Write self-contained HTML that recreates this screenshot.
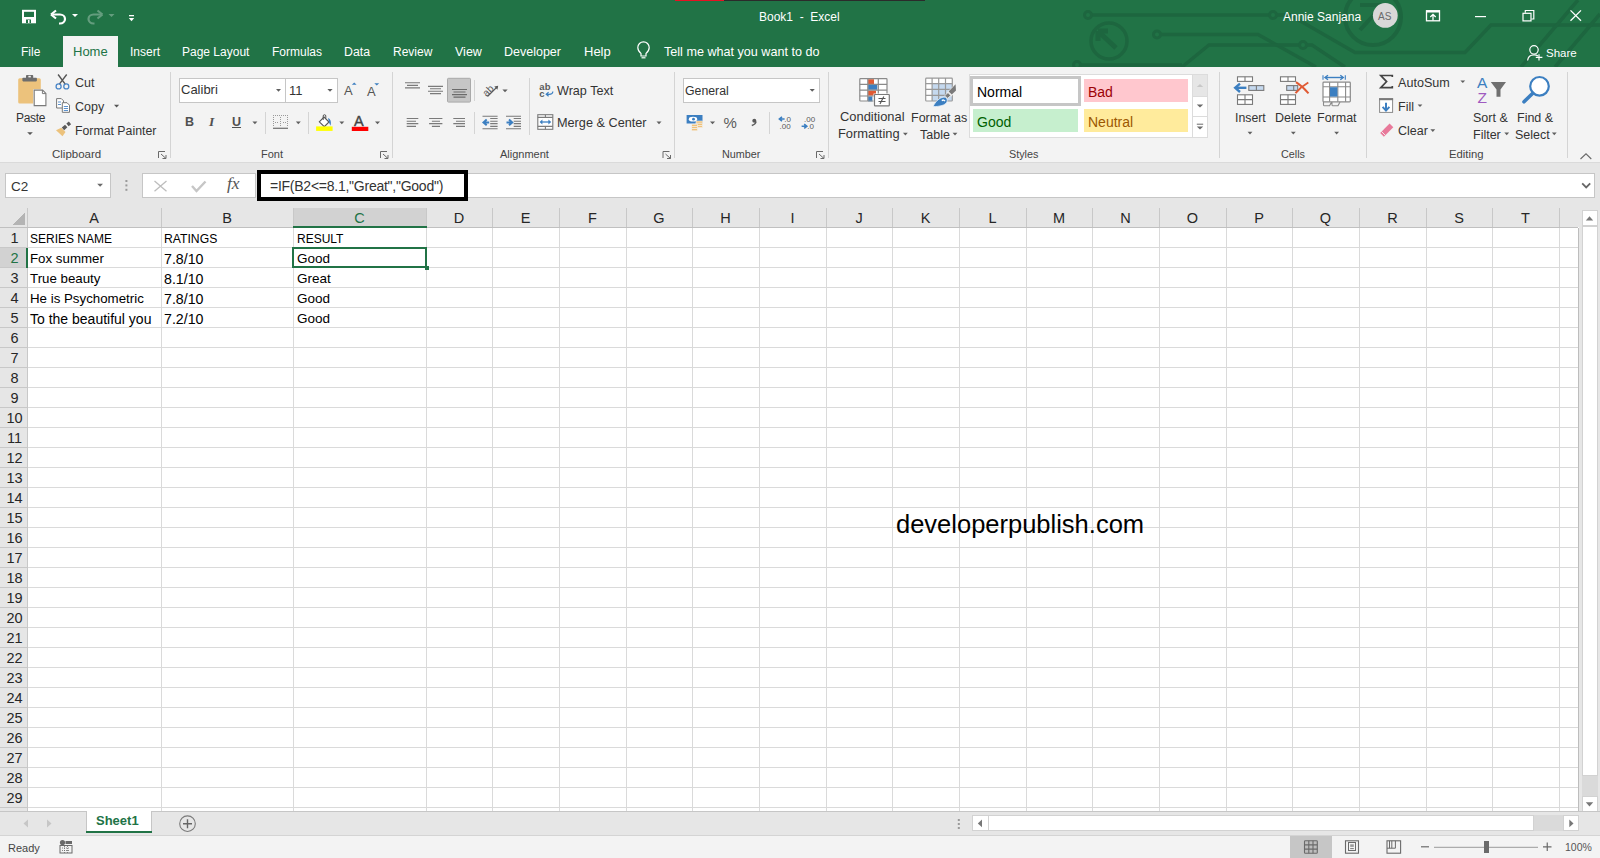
<!DOCTYPE html>
<html><head><meta charset="utf-8">
<style>
*{margin:0;padding:0;box-sizing:border-box}
html,body{width:1600px;height:858px;overflow:hidden;background:#fff;font-family:"Liberation Sans",sans-serif;color:#262626}
.a{position:absolute;white-space:nowrap}
.tt{position:absolute;color:#fff;font-size:12px;white-space:nowrap;line-height:14px}
.rl{position:absolute;font-size:12.5px;color:#333;white-space:nowrap;line-height:14px}
.gl{position:absolute;font-size:11px;color:#444;white-space:nowrap;line-height:13px}
svg{position:absolute;overflow:visible}
</style></head><body>

<div style="position:absolute;left:0;top:0;width:1600px;height:67px;background:#217346"></div>
<svg width="1600" height="67" style="left:0;top:0" fill="none" stroke="#1d663f" stroke-width="3.5">
 <path d="M1091 15 H1270"/><circle cx="1088" cy="15" r="3.5" stroke-width="3"/><circle cx="1273" cy="15" r="3.5" stroke-width="3"/>
 <path d="M1277 15 H1290 L1355 52.5 H1465 L1491 25 H1600"/>
 <circle cx="1109" cy="41" r="18"/>
 <path d="M1116 48 L1100 33 M1098 31 h10 M1098 31 v10" stroke-width="5"/>
 <circle cx="1157" cy="34.5" r="3.5" stroke-width="3"/><path d="M1161 34.5 H1258 L1316 67"/>
 <path d="M1182 67 L1209 45 H1299"/><circle cx="1303" cy="45" r="3.5" stroke-width="3"/><path d="M1307 45 H1312 L1345 67"/>
 <circle cx="1077" cy="65" r="3.5" stroke-width="3"/><path d="M1081 65 H1182"/>
 <circle cx="1373" cy="17" r="28" stroke-width="4"/>
 <path d="M1360 30 L1382 6 M1360 5 H1384" stroke-width="4"/>
 <path d="M1521 67 L1578 0 M1555 67 L1600 14"/>
</svg>
<div style="position:absolute;left:675px;top:0;width:49px;height:1px;background:#e81123"></div>
<div style="position:absolute;left:724px;top:0;width:201px;height:1px;background:#2b2b2b"></div>
<!-- QAT -->
<svg width="140" height="30" style="left:0;top:0">
 <rect x="23" y="10.8" width="12" height="11.5" fill="none" stroke="#fff" stroke-width="2"/>
 <rect x="23" y="17" width="12" height="6" fill="#fff"/>
 <rect x="26" y="19.5" width="5" height="3.5" fill="#217346"/><rect x="28" y="20" width="1.5" height="3" fill="#fff"/>
 <path d="M52.5 14.5 H60 A5 4.5 0 0 1 60 23.5 H59" fill="none" stroke="#fff" stroke-width="2.2"/>
 <path d="M51 14.5 L56 10.5 M51 14.5 L56 18.5" fill="none" stroke="#fff" stroke-width="2.2"/>
 <path d="M72 14 H78 L75 17 Z" fill="#fff"/>
 <g opacity="0.3"><path d="M101 14.5 H93.5 A5 4.5 0 0 0 93.5 23.5 H94.5" fill="none" stroke="#fff" stroke-width="2.2"/>
 <path d="M102.5 14.5 L97.5 10.5 M102.5 14.5 L97.5 18.5" fill="none" stroke="#fff" stroke-width="2.2"/>
 <path d="M108.5 14 H114.5 L111.5 17 Z" fill="#fff"/></g>
 <rect x="129" y="15" width="5" height="1.3" fill="#fff"/><path d="M128.8 18 H134.2 L131.5 21.2 Z" fill="#fff"/>
</svg>
<div class="tt" style="left:759px;top:10px;font-size:12px">Book1&nbsp;&nbsp;-&nbsp;&nbsp;Excel</div>
<div class="tt" style="left:1283px;top:10px;font-size:12px">Annie Sanjana</div>
<svg width="1600" height="67" style="left:0;top:0">
 <circle cx="1385.3" cy="15.4" r="12.4" fill="#d8d8d8"/>
 <rect x="1426.5" y="10.8" width="13" height="10" fill="none" stroke="#fff" stroke-width="1.3"/>
 <rect x="1426" y="10.3" width="14" height="2.2" fill="#fff"/>
 <path d="M1433 20.5 V14.5 M1430.3 17 L1433 14.3 L1435.7 17" fill="none" stroke="#fff" stroke-width="1.3"/>
 <rect x="1475" y="16" width="11" height="1.2" fill="#fff"/>
 <path d="M1525.3 12.8 V10.5 H1533.8 V19 H1531.4" fill="none" stroke="#fff" stroke-width="1.2"/>
 <rect x="1523" y="13.3" width="8" height="7.6" fill="none" stroke="#fff" stroke-width="1.2"/>
 <path d="M1570.5 10.4 L1581 20.8 M1581 10.4 L1570.5 20.8" fill="none" stroke="#fff" stroke-width="1.3"/>
 <circle cx="1534" cy="49.8" r="4.2" fill="none" stroke="#fff" stroke-width="1.2"/>
 <path d="M1527.6 60.5 C1528 56.5 1530.5 54.8 1534 54.8 C1535.5 54.8 1537 55.2 1538 56" fill="none" stroke="#fff" stroke-width="1.2"/>
 <path d="M1539 54.2 V60.6 M1535.8 57.4 H1542.4" fill="none" stroke="#fff" stroke-width="1.2"/>
</svg>
<div class="a" style="left:1378px;top:10px;font-size:10px;color:#6a6a6a;line-height:14px">AS</div>
<div style="position:absolute;left:63px;top:36px;width:55px;height:32px;background:#f3f3f3"></div>
<div class="tt" style="left:21px;top:45px">File</div>
<div class="tt" style="left:73px;top:45px;color:#217346;font-size:13px">Home</div>
<div class="tt" style="left:130px;top:45px">Insert</div>
<div class="tt" style="left:182px;top:45px">Page Layout</div>
<div class="tt" style="left:272px;top:45px">Formulas</div>
<div class="tt" style="left:344px;top:45px;font-size:12.3px">Data</div>
<div class="tt" style="left:393px;top:45px">Review</div>
<div class="tt" style="left:455px;top:45px;font-size:12.5px">View</div>
<div class="tt" style="left:504px;top:45px;font-size:12.5px">Developer</div>
<div class="tt" style="left:584px;top:45px;font-size:13px">Help</div>
<svg width="20" height="24" style="left:636px;top:40px">
 <path d="M5 13.5 C2.5 11.5 1.8 9.5 1.8 7.5 A5.7 5.7 0 0 1 13.2 7.5 C13.2 9.5 12.5 11.5 10 13.5 V16 H5 Z" fill="none" stroke="#fff" stroke-width="1.2"/>
 <path d="M5.5 17.8 H9.5" stroke="#fff" stroke-width="1.2"/>
</svg>
<div class="tt" style="left:664px;top:45px;font-size:12.6px">Tell me what you want to do</div>
<div class="tt" style="left:1546px;top:46px;font-size:11.5px">Share</div>

<div style="position:absolute;left:0;top:67px;width:1600px;height:95px;background:#f3f3f3"></div>
<!-- separators -->
<svg width="1600" height="162" style="left:0;top:0" shape-rendering="crispEdges">
 <g fill="#d4d4d4">
 <rect x="170" y="72" width="1" height="86"/>
 <rect x="392" y="72" width="1" height="86"/>
 <rect x="674" y="72" width="1" height="86"/>
 <rect x="828" y="72" width="1" height="86"/>
 <rect x="1219" y="72" width="1" height="86"/>
 <rect x="1366" y="72" width="1" height="86"/>
 <rect x="1567" y="72" width="1" height="86"/>
 <rect x="265" y="112" width="1" height="22"/>
 <rect x="308" y="112" width="1" height="22"/>
 <rect x="474" y="80" width="1" height="21"/>
 <rect x="474" y="112" width="1" height="22"/>
 <rect x="529" y="78" width="1" height="57"/>
 <rect x="769" y="112" width="1" height="22"/>
 </g>
</svg>
<!-- group labels -->
<div class="gl" style="left:52px;top:148px;font-size:11.5px">Clipboard</div>
<div class="gl" style="left:261px;top:148px;font-size:11px">Font</div>
<div class="gl" style="left:500px;top:148px;font-size:11px">Alignment</div>
<div class="gl" style="left:722px;top:148px;font-size:10.8px">Number</div>
<div class="gl" style="left:1009px;top:148px;font-size:10.8px">Styles</div>
<div class="gl" style="left:1281px;top:148px;font-size:10.8px">Cells</div>
<div class="gl" style="left:1449px;top:148px;font-size:11.3px">Editing</div>
<!-- clipboard -->
<div class="rl" style="left:16px;top:111px;font-size:12px;letter-spacing:-0.3px">Paste</div>
<div class="rl" style="left:75px;top:76px">Cut</div>
<div class="rl" style="left:75px;top:100px">Copy</div>
<div class="rl" style="left:75px;top:124px;font-size:12.3px">Format Painter</div>
<!-- font -->
<div style="position:absolute;left:179px;top:78px;width:107px;height:25px;background:#fff;border:1px solid #c6c6c6"></div>
<div style="position:absolute;left:285px;top:78px;width:53px;height:25px;background:#fff;border:1px solid #c6c6c6"></div>
<div class="rl" style="left:181px;top:83px;font-size:13px;color:#333">Calibri</div>
<div class="rl" style="left:289px;top:84px;font-size:13px;color:#333">11</div>
<!-- alignment -->
<div class="rl" style="left:557px;top:84px;font-size:12.6px">Wrap Text</div>
<div class="rl" style="left:557px;top:116px;font-size:12.7px">Merge &amp; Center</div>
<!-- number -->
<div style="position:absolute;left:683px;top:78px;width:137px;height:25px;background:#fff;border:1px solid #c6c6c6"></div>
<div class="rl" style="left:685px;top:84px;font-size:12.3px;color:#333">General</div>
<!-- styles -->
<div class="rl" style="left:840px;top:110px;font-size:12.9px">Conditional</div>
<div class="rl" style="left:838px;top:127px;font-size:12.9px">Formatting</div>
<div class="rl" style="left:911px;top:111px">Format as</div>
<div class="rl" style="left:920px;top:128px">Table</div>
<div style="position:absolute;left:969px;top:74px;width:224px;height:64px;background:#fff;border:1px solid #dcdcdc;border-right:none"></div>
<div style="position:absolute;left:970px;top:76px;width:111px;height:30px;background:#fff;border:3px solid #c6c6c6"></div>
<div style="position:absolute;left:1084px;top:79px;width:104px;height:23px;background:#ffc7ce"></div>
<div style="position:absolute;left:973px;top:109px;width:105px;height:23px;background:#c6efce"></div>
<div style="position:absolute;left:1084px;top:109px;width:104px;height:23px;background:#ffeb9c"></div>
<div class="rl" style="left:977px;top:85px;font-size:14px;color:#000">Normal</div>
<div class="rl" style="left:1088px;top:85px;font-size:14px;color:#9c0006">Bad</div>
<div class="rl" style="left:977px;top:115px;font-size:14px;color:#006100">Good</div>
<div class="rl" style="left:1088px;top:115px;font-size:14px;color:#9c5700">Neutral</div>
<div style="position:absolute;left:1192px;top:74px;width:16px;height:64px;background:#fff;border:1px solid #dcdcdc"></div>
<div style="position:absolute;left:1193px;top:75px;width:14px;height:21px;background:#e6e6e6"></div>
<div style="position:absolute;left:1193px;top:96px;width:14px;height:1px;background:#dcdcdc"></div>
<div style="position:absolute;left:1193px;top:116px;width:14px;height:1px;background:#dcdcdc"></div>
<!-- cells -->
<div class="rl" style="left:1235px;top:111px;font-size:12.3px">Insert</div>
<div class="rl" style="left:1275px;top:111px;font-size:12.5px">Delete</div>
<div class="rl" style="left:1317px;top:111px;font-size:12.5px">Format</div>
<!-- editing -->
<div class="rl" style="left:1398px;top:76px;font-size:12.6px">AutoSum</div>
<div class="rl" style="left:1398px;top:100px">Fill</div>
<div class="rl" style="left:1398px;top:124px">Clear</div>
<div class="rl" style="left:1473px;top:111px;font-size:12.5px">Sort &amp;</div>
<div class="rl" style="left:1473px;top:128px;font-size:12.5px">Filter</div>
<div class="rl" style="left:1517px;top:111px;font-size:12.5px">Find &amp;</div>
<div class="rl" style="left:1515px;top:128px;font-size:12.5px">Select</div>

<svg width="1600" height="162" style="left:0;top:0">
 <!-- Paste -->
 <rect x="18.2" y="78.2" width="22.6" height="25.4" rx="1.5" fill="#ecc27c"/>
 <rect x="22.4" y="77.7" width="14.5" height="3.7" rx="0.8" fill="#6d6d6d"/>
 <path d="M26 78.5 V75.8 Q26 75 26.8 75 H32.4 Q33.2 75 33.2 75.8 V78.5 Z" fill="#6d6d6d"/>
 <rect x="28.4" y="75.8" width="2.4" height="1.6" fill="#f3f3f3"/>
 <path d="M33.2 89.2 H43 L46.8 93 V106.5 H33.2 Z" fill="#f3f3f3"/>
 <path d="M34.2 90.1 H42.6 L45.9 93.4 V105.6 H34.2 Z" fill="#fff" stroke="#7a7a7a" stroke-width="1.1"/>
 <path d="M42.4 90.1 V93.6 H45.9" fill="none" stroke="#7a7a7a" stroke-width="1"/>
 <path d="M27.2 132.3 H32.8 L30 135 Z" fill="#555"/>
 <!-- Cut -->
 <path d="M58.1 74.5 L65.2 84.2 M66.7 74.5 L59.4 84.2" stroke="#555" stroke-width="1.4" fill="none"/>
 <circle cx="58.6" cy="86.4" r="2.5" fill="none" stroke="#4a86c8" stroke-width="1.3"/>
 <circle cx="66.3" cy="86.4" r="2.5" fill="none" stroke="#4a86c8" stroke-width="1.3"/>
 <!-- Copy -->
 <path d="M56.6 98.6 H61.3 L63.5 100.8 V108 H56.6 Z" fill="#fff" stroke="#777" stroke-width="1"/>
 <path d="M62.3 102.7 H67 L69.5 105.2 V112.3 H62.3 Z" fill="#fff" stroke="#777" stroke-width="1"/>
 <path d="M58 102 H61 M58 104.5 H61 M63.8 106.5 H68 M63.8 108.5 H68 M63.8 110.5 H68" stroke="#4a86c8" stroke-width="0.9"/>
 <path d="M114 104.8 H119.2 L116.6 107.4 Z" fill="#555"/>
 <!-- Format painter -->
 <path d="M56 130.2 L61.3 127.8 L65.5 132 L62.5 136.2 Z" fill="#ecc27c"/>
 <path d="M63 128.8 L66.2 126 M67.5 124.8 L70 122.8" stroke="#5a5a5a" stroke-width="3.6" fill="none"/>
</svg>

<svg width="1600" height="162" style="left:0;top:0">
 <g fill="#5f5f5f">
 <!-- dropdown carets -->
 <path d="M276 89 H281 L278.5 91.8 Z"/>
 <path d="M327.4 89 H332.6 L330 91.8 Z"/>
 <path d="M252.4 121.5 H257.4 L254.9 124.2 Z"/>
 <path d="M295.9 121.5 H300.8 L298.3 124.2 Z"/>
 <path d="M339.4 121.5 H344.3 L341.8 124.2 Z"/>
 <path d="M375 121.5 H380 L377.5 124.2 Z"/>
 <path d="M502.4 89.4 H507.7 L505 92.2 Z"/>
 <path d="M656.5 121.5 H661.5 L659 124.2 Z"/>
 <path d="M809.6 89 H814.8 L812.2 91.8 Z"/>
 <path d="M710 121.6 H715.1 L712.5 124.2 Z"/>
 </g>
 <!-- launchers -->
 <g fill="none" stroke="#6a6a6a" stroke-width="1">
 <path d="M158.5 158 V151.5 H165"/><path d="M161 154 L166 158.5 M166 155 V158.5 H162.5"/>
 <path d="M380.5 158 V151.5 H387"/><path d="M383 154 L388 158.5 M388 155 V158.5 H384.5"/>
 <path d="M663 158 V151.5 H669.5"/><path d="M665.5 154 L670.5 158.5 M670.5 155 V158.5 H667"/>
 <path d="M816.5 158 V151.5 H823"/><path d="M819 154 L824 158.5 M824 155 V158.5 H820.5"/>
 </g>
 <!-- grow/shrink font -->
 <path d="M351.8 84.8 L354.2 82.4 L356.6 84.8 Z" fill="#3c7fc1"/>
 <path d="M374.3 83.2 H379.2 L376.75 85.6 Z" fill="#3c7fc1"/>
 <!-- borders icon -->
 <g fill="#9a9a9a">
  <rect x="273" y="115" width="1" height="1"/><rect x="275" y="115" width="1" height="1"/><rect x="277" y="115" width="1" height="1"/><rect x="279" y="115" width="1" height="1"/><rect x="281" y="115" width="1" height="1"/><rect x="283" y="115" width="1" height="1"/><rect x="285" y="115" width="1" height="1"/><rect x="287" y="115" width="1" height="1"/>
  <rect x="273" y="117" width="1" height="1"/><rect x="273" y="119" width="1" height="1"/><rect x="273" y="121" width="1" height="1"/><rect x="273" y="123" width="1" height="1"/><rect x="273" y="125" width="1" height="1"/>
  <rect x="287" y="117" width="1" height="1"/><rect x="287" y="119" width="1" height="1"/><rect x="287" y="121" width="1" height="1"/><rect x="287" y="123" width="1" height="1"/><rect x="287" y="125" width="1" height="1"/>
  <rect x="275" y="122" width="1" height="1"/><rect x="277" y="122" width="1" height="1"/><rect x="283" y="122" width="1" height="1"/><rect x="285" y="122" width="1" height="1"/>
 </g>
 <g fill="#9a9a9a"><rect x="280" y="117" width="1" height="1"/><rect x="280" y="119" width="1" height="1"/><rect x="280" y="121" width="1" height="1"/><rect x="280" y="123" width="1" height="1"/><rect x="280" y="125" width="1" height="1"/></g>
 <path d="M273 128.3 H288" stroke="#777" stroke-width="1.3"/>
 <!-- fill color -->
 <path d="M319.3 121.8 L324 117 L329 122 L324.3 126.7 Z" fill="#fff" stroke="#555" stroke-width="1.1"/>
 <path d="M323.2 120 V116 A1.3 1.3 0 0 1 325.8 116 V118.5" fill="none" stroke="#555" stroke-width="1"/>
 <path d="M328 118 Q332 119.5 330.5 125.8 Q329 123 328.8 121.5 Z" fill="#3c7fc1"/>
 <rect x="316.1" y="126.4" width="16.5" height="4.5" fill="#ffff00"/>
 <!-- font color -->
 <rect x="351.8" y="126.8" width="16.5" height="4.2" fill="#ff0000"/>
 <!-- align top -->
 <g stroke="#7a7a7a" stroke-width="1.1" fill="none">
  <path d="M405 82.7 H420 M407 85.4 H418 M405 87.9 H420"/>
  <path d="M428 86.4 H443 M430 88.8 H441 M428 91.3 H443 M430 93.6 H441"/>
  <path d="M406.7 118.5 H418.3 M406.7 121.3 H416 M406.7 123.6 H418.3 M406.7 126.4 H416"/>
  <path d="M429.1 118.5 H442.4 M431.9 121.3 H440 M429.1 123.6 H442.4 M431.9 126.4 H440"/>
  <path d="M453.3 118.5 H465 M456 121.3 H465 M453.3 123.6 H465 M456 126.4 H465"/>
  <path d="M482.5 116.3 H497.6 M490.2 118.5 H497.6 M490.2 121.3 H497.6 M490.2 123.6 H497.6 M490.2 126.4 H497.6 M482.5 128.7 H497.6"/>
  <path d="M506 116.3 H521 M513.7 118.5 H521 M513.7 121.3 H521 M513.7 123.6 H521 M513.7 126.4 H521 M506 128.7 H521"/>
 </g>
 <rect x="447.5" y="78.3" width="23" height="23.8" rx="1" fill="#c6c6c6" stroke="#a9a9a9" stroke-width="1"/>
 <g stroke="#6a6a6a" stroke-width="1.1" fill="none"><path d="M452 89.5 H467 M453.5 92 H465.5 M452 94.6 H467 M453.5 97.1 H465.5"/></g>
 <!-- indent arrows -->
 <path d="M489.2 122.4 H484.2 M486.7 119.6 L483.5 122.4 L486.7 125.2" fill="none" stroke="#3c7fc1" stroke-width="2"/>
 <path d="M506.5 122.4 H511.5 M509 119.6 L512.2 122.4 L509 125.2" fill="none" stroke="#3c7fc1" stroke-width="2"/>
 <!-- orientation -->
 <g transform="translate(489,89.5) rotate(-45)"><text x="-7" y="3.5" font-family="Liberation Sans" font-size="10" fill="#5a5a5a">ab</text></g>
 <path d="M487.5 96.5 L497.5 86.5" stroke="#5a5a5a" stroke-width="1.1"/>
 <path d="M498.2 85.8 L494.3 86.6 L497.4 89.7 Z" fill="#5a5a5a"/>
 <!-- wrap text -->
 <text x="539.3" y="89.6" font-family="Liberation Sans" font-size="9.5" font-weight="bold" fill="#5a5a5a" letter-spacing="0.1">ab</text>
 <text x="539.3" y="96.7" font-family="Liberation Sans" font-size="9.5" font-weight="bold" fill="#5a5a5a">c</text>
 <path d="M552.8 91.5 Q552.8 94.3 549 94.3 H546.5 M548.6 92.2 L546.2 94.3 L548.6 96.3" fill="none" stroke="#3c7fc1" stroke-width="1.2"/>
 <!-- merge -->
 <rect x="537.8" y="114.7" width="15" height="14.6" fill="#fff" stroke="#7a7a7a" stroke-width="1.1"/>
 <path d="M537.8 117.4 H552.8 M537.8 126.4 H552.8 M545.4 114.7 V117.4 M545.4 126.4 V129.3" stroke="#7a7a7a" stroke-width="1.1" fill="none"/>
 <path d="M541 122 H549.8" stroke="#3c7fc1" stroke-width="1.3"/>
 <path d="M539.6 122 L542.4 119.6 V124.4 Z M551.2 122 L548.4 119.6 V124.4 Z" fill="#3c7fc1"/>
 <!-- currency -->
 <rect x="686.6" y="115" width="15.9" height="8.5" fill="#3c7fc1"/>
 <ellipse cx="693" cy="119.2" rx="4.2" ry="2.4" fill="#fff"/><circle cx="693.5" cy="119.2" r="1.4" fill="#3c7fc1"/>
 <g fill="#f0c27a" stroke="#f3f3f3" stroke-width="0.6">
  <rect x="696" y="121" width="6.5" height="2.2"/><rect x="696" y="123.2" width="6.5" height="2.2"/><rect x="696" y="125.4" width="6.5" height="2.2"/>
  <rect x="691.7" y="124.2" width="5.8" height="2.2"/><rect x="691.7" y="126.4" width="5.8" height="2.2"/><rect x="691.7" y="128.6" width="5.8" height="2.2"/>
 </g>
 <text x="723.5" y="128.2" font-family="Liberation Sans" font-size="15" fill="#5a5a5a">%</text>
 <circle cx="754.3" cy="120.8" r="2" fill="#5a5a5a"/><path d="M756 121.5 Q755.8 124.3 751.8 125.5" fill="none" stroke="#5a5a5a" stroke-width="1.5"/>
 <!-- inc/dec decimal -->
 <text x="784.3" y="121.8" font-family="Liberation Sans" font-size="8" fill="#5a5a5a">.0</text>
 <text x="779.6" y="129.3" font-family="Liberation Sans" font-size="8" fill="#5a5a5a">.00</text>
 <path d="M784.6 119 H779.8 M782 116.9 L779.4 119 L782 121.1" fill="none" stroke="#3c7fc1" stroke-width="1.6"/>
 <text x="804" y="121.8" font-family="Liberation Sans" font-size="8" fill="#5a5a5a">.00</text>
 <text x="807.3" y="129.3" font-family="Liberation Sans" font-size="8" fill="#5a5a5a">.0</text>
 <path d="M801.6 126.3 H806.6 M804.2 124.2 L806.8 126.3 L804.2 128.4" fill="none" stroke="#3c7fc1" stroke-width="1.6"/>
</svg>
<div class="a" style="left:185px;top:114px;font-size:12.5px;font-weight:bold;color:#505050;line-height:16px">B</div>
<div class="a" style="left:209px;top:114px;font-size:13.5px;font-weight:bold;font-style:italic;font-family:'Liberation Serif',serif;color:#505050;line-height:16px">I</div>
<div class="a" style="left:232px;top:114px;font-size:12.5px;font-weight:bold;color:#505050;line-height:16px;text-decoration:underline;text-underline-offset:1px">U</div>
<div class="a" style="left:344px;top:83px;font-size:13px;color:#555;line-height:16px">A</div>
<div class="a" style="left:367px;top:83.5px;font-size:13px;color:#555;line-height:16px">A</div>
<div class="a" style="left:354px;top:112px;font-size:14.5px;color:#444;line-height:18px;-webkit-text-stroke:0.4px #444">A</div>

<svg width="1600" height="162" style="left:0;top:0">
 <g fill="#5f5f5f">
 <path d="M903 132.8 H907.8 L905.4 135.4 Z"/>
 <path d="M952.6 132.8 H957.4 L955 135.4 Z"/>
 <path d="M1247.6 131.8 H1252.4 L1250 134.4 Z"/>
 <path d="M1290.9 131.8 H1295.7 L1293.3 134.4 Z"/>
 <path d="M1334.2 131.8 H1339 L1336.6 134.4 Z"/>
 <path d="M1460.4 80.5 H1465.2 L1462.8 83.1 Z"/>
 <path d="M1417.6 104.5 H1422.4 L1420 107.1 Z"/>
 <path d="M1430.4 129.3 H1435.2 L1432.8 131.9 Z"/>
 <path d="M1504.3 132.6 H1509.1 L1506.7 135.2 Z"/>
 <path d="M1551.9 132.6 H1556.7 L1554.3 135.2 Z"/>
 </g>
 <path d="M1196.8 87 L1200 84 L1203.2 87 Z" fill="#c8c8c8"/>
 <path d="M1196.8 104.6 H1203.2 L1200 107.6 Z" fill="#6a6a6a"/>
 <path d="M1196.8 124.2 H1203.2" stroke="#6a6a6a" stroke-width="1"/><path d="M1196.8 126.4 H1203.2 L1200 129.4 Z" fill="#6a6a6a"/>
 <path d="M1580.5 159 L1586 153.8 L1591.3 159" fill="none" stroke="#6a6a6a" stroke-width="1.1"/>
 <!-- conditional formatting -->
 <rect x="859.8" y="78.7" width="27.2" height="22.3" fill="#fff"/>
 <rect x="868.1" y="79.2" width="5.9" height="5" fill="#e05a34"/>
 <rect x="868.1" y="84.8" width="9.2" height="5" fill="#3c7fc1"/>
 <rect x="868.1" y="90.6" width="7.9" height="5" fill="#e05a34"/>
 <rect x="868.1" y="96.4" width="4.3" height="5" fill="#3c7fc1"/>
 <g fill="none" stroke="#8a8a8a" stroke-width="1.2">
  <rect x="859.8" y="78.7" width="27.2" height="22.3" rx="0.8"/>
  <path d="M859.8 84.3 H887 M859.8 90.2 H887 M859.8 96 H887 M878.3 78.7 V101"/>
 </g>
 <path d="M867.8 78.7 V101" stroke="#8a8a8a" stroke-width="1.2"/>
 <rect x="873.5" y="93.5" width="16.8" height="13.4" fill="#f3f3f3"/>
 <rect x="874.5" y="94.5" width="14.8" height="11.4" rx="0.6" fill="#fff" stroke="#7a7a7a" stroke-width="1.2"/>
 <path d="M878.5 98.5 H885.5 M878.5 101.5 H885.5 M883.8 96.5 L880 104" stroke="#555" stroke-width="1.1" fill="none"/>
 <!-- format as table -->
 <rect x="925.7" y="78.1" width="26.6" height="22.9" fill="#fff"/>
 <rect x="932.1" y="83.7" width="20.2" height="17.3" fill="#c5d9ef"/>
 <g fill="none" stroke="#999" stroke-width="1.2">
  <rect x="925.7" y="78.1" width="26.6" height="22.9" rx="0.8"/>
  <path d="M925.7 83.7 H952.3 M925.7 89.4 H952.3 M925.7 95.3 H952.3 M932.1 78.1 V101 M938.7 78.1 V101 M945.5 78.1 V101"/>
 </g>
 <path d="M956 83.5 L956.6 90.8 L951 96.8 L946.5 92.8 Z" fill="#f3f3f3"/>
 <path d="M955.6 84.2 L956 90.5 L951.8 94.6 L948.6 91.6 Z" fill="#7a7a7a"/>
 <path d="M948 92.6 L950.8 95.4 L947.6 98.4 L944.8 95.6 Z" fill="#7a7a7a" stroke="#f3f3f3" stroke-width="0.8"/>
 <path d="M933 106.6 C935.5 101.5 939.5 97.6 943.6 97.2 C946.6 96.9 948 99.6 946.8 102.2 C945.2 105.2 940 106.6 933 106.6 Z" fill="#3c7fc1" stroke="#e9f1fa" stroke-width="0.8"/>
 <path d="M941.8 100.6 Q943.8 99.2 945 101.2" fill="none" stroke="#fff" stroke-width="1.3"/>
 <!-- insert cells -->
 <g fill="#fff" stroke="#7a7a7a" stroke-width="1.1">
  <rect x="1237.5" y="76.8" width="15" height="4.6"/>
  <rect x="1237.5" y="94.8" width="15" height="9.6"/>
  <rect x="1280.5" y="76.8" width="15" height="4.6"/>
  <rect x="1280.5" y="94.8" width="15" height="9.6"/>
 </g>
 <path d="M1245 76.8 V81.4 M1245 94.8 V104.4 M1237.5 99.6 H1252.5 M1288 76.8 V81.4 M1288 94.8 V104.4 M1280.5 99.6 H1295.5" stroke="#7a7a7a" stroke-width="1.1"/>
 <rect x="1248.8" y="85.6" width="15" height="4.8" fill="#c5d9ef" stroke="#7a7a7a" stroke-width="1.1"/>
 <path d="M1256.4 85.6 V90.4" stroke="#7a7a7a" stroke-width="1.1"/>
 <path d="M1246.4 87.8 H1237" stroke="#3c7fc1" stroke-width="2.4"/>
 <path d="M1240 83.6 L1235.2 87.8 L1240 92" fill="none" stroke="#3c7fc1" stroke-width="2.4"/>
 <!-- delete cells -->
 <rect x="1286.7" y="85.6" width="11" height="4.8" fill="#c5d9ef" stroke="#7a7a7a" stroke-width="1.1"/>
 <path d="M1293.7 85.6 V90.4" stroke="#7a7a7a" stroke-width="1.1"/>
 <path d="M1296 82.2 Q1302 86 1308.5 93.3 M1308.3 82.5 Q1300.5 87 1295.5 93.2" fill="none" stroke="#e05a34" stroke-width="2"/>
 <!-- format cells -->
 <rect x="1323" y="82.2" width="27.3" height="19.6" rx="0.8" fill="#fff" stroke="#8a8a8a" stroke-width="1.2"/>
 <path d="M1323 86.8 H1350.3 M1323 97 H1350.3 M1329.6 82.2 V101.8 M1337.8 82.2 V101.8 M1345.6 82.2 V101.8" stroke="#8a8a8a" stroke-width="1.1"/>
 <rect x="1330" y="87.2" width="7.4" height="9.4" fill="#3c7fc1"/>
 <path d="M1323.5 102 V105 Q1323.5 105.8 1324.5 105.8 H1329.6 L1331.5 102 M1332 102 V105 Q1332 105.8 1333 105.8 H1338 L1340 102" fill="none" stroke="#8a8a8a" stroke-width="1.1"/>
 <path d="M1323 75.2 V79.8 M1345.3 75.2 V79.8" stroke="#3c7fc1" stroke-width="1.1"/>
 <path d="M1325.5 77.5 H1342.8" stroke="#3c7fc1" stroke-width="1.4"/>
 <path d="M1328 75.2 L1325 77.5 L1328 79.8 M1340.3 75.2 L1343.3 77.5 L1340.3 79.8" fill="none" stroke="#3c7fc1" stroke-width="1.4"/>
 <!-- autosum -->
 <path d="M1392.3 77 V75.5 H1380.8 L1386.6 81.6 L1380.8 87.6 H1392.3 V86" fill="none" stroke="#444" stroke-width="1.7"/>
 <!-- fill -->
 <rect x="1379.6" y="98.7" width="13" height="13.7" fill="#fff" stroke="#8a8a8a" stroke-width="1"/>
 <rect x="1379.1" y="98.2" width="14" height="2" fill="#7a7a7a"/>
 <path d="M1386 102.8 V110" stroke="#3c7fc1" stroke-width="2"/>
 <path d="M1382.6 106.8 L1386 110.6 L1389.4 106.8" fill="none" stroke="#3c7fc1" stroke-width="2"/>
 <!-- clear -->
 <path d="M1380.2 133 L1389.6 123.6 L1393.3 127.3 L1383.9 136.7 Z" fill="#e8799a"/>
 <path d="M1381.5 131.5 L1385.3 135.3" stroke="#f3f3f3" stroke-width="0.9"/>
 <!-- sort -->
 <text x="1477" y="88.4" font-family="Liberation Sans" font-size="15.5" fill="#3c7fc1">A</text>
 <text x="1477.4" y="102.8" font-family="Liberation Sans" font-size="15.5" fill="#9f5ac0">Z</text>
 <path d="M1490.8 82.1 H1506 L1500.5 89.5 V96.8 H1496.5 V89.5 Z" fill="#707070"/>
 <!-- find -->
 <circle cx="1539.5" cy="86.3" r="9.3" fill="#fff" stroke="#3c7fc1" stroke-width="2.2"/>
 <path d="M1532.8 93.2 L1524 101.8" stroke="#3c7fc1" stroke-width="3.6" stroke-linecap="round"/>
</svg>

<div style="position:absolute;left:0;top:162px;width:1600px;height:46px;background:#e6e6e6"></div>
<div style="position:absolute;left:0;top:162px;width:1600px;height:1px;background:#dadada"></div>
<div style="position:absolute;left:5px;top:173px;width:106px;height:25px;background:#fff;border:1px solid #c6c6c6"></div>
<div class="a" style="left:11px;top:179px;font-size:13.5px;color:#333;line-height:16px">C2</div>
<div style="position:absolute;left:142px;top:173px;width:114px;height:25px;background:#fff;border:1px solid #c6c6c6"></div>
<div style="position:absolute;left:257px;top:173px;width:1338px;height:25px;background:#fff;border:1px solid #c6c6c6"></div>
<div style="position:absolute;left:257px;top:170px;width:211px;height:31px;border:4px solid #000"></div>
<div class="a" style="left:270px;top:178px;font-size:14px;letter-spacing:-0.25px;color:#333;line-height:16px">=IF(B2&lt;=8.1,"Great","Good")</div>
<svg width="1600" height="210" style="left:0;top:0">
 <path d="M97.2 183.7 H103 L100.1 186.7 Z" fill="#6a6a6a"/>
 <rect x="125.4" y="180" width="2" height="2" fill="#9a9a9a"/>
 <rect x="125.4" y="184.4" width="2" height="2" fill="#9a9a9a"/>
 <rect x="125.4" y="188.8" width="2" height="2" fill="#9a9a9a"/>
 <path d="M154.5 181 L166.5 191.3 M166.5 181 L154.5 191.3" stroke="#bdbdbd" stroke-width="1.3"/>
 <path d="M192 186 L196.5 191 L205.5 181.5" fill="none" stroke="#c6c6c6" stroke-width="2.4"/>
 <path d="M1582.2 183.3 L1586.2 187.4 L1590.2 183.3" fill="none" stroke="#666" stroke-width="1.8"/>
</svg>
<div class="a" style="left:227px;top:173px;font-size:17.5px;font-style:italic;font-family:'Liberation Serif',serif;color:#555;line-height:20px">fx</div>

<div style="position:absolute;left:0;top:208px;width:1579px;height:19px;background:#e6e6e6"></div>
<div style="position:absolute;left:0;top:228px;width:27px;height:583px;background:#e6e6e6"></div>
<div style="position:absolute;left:293px;top:208px;width:134px;height:19px;background:#d2d2d2"></div>
<div style="position:absolute;left:0;top:248px;width:27px;height:20px;background:#d2d2d2"></div>
<svg width="1600" height="858" style="position:absolute;left:0;top:0" shape-rendering="crispEdges">
<line x1="28" y1="247.5" x2="1578" y2="247.5" stroke="#dadada" stroke-width="1"/>
<line x1="0" y1="247.5" x2="27" y2="247.5" stroke="#c8c8c8" stroke-width="1"/>
<line x1="28" y1="267.5" x2="1578" y2="267.5" stroke="#dadada" stroke-width="1"/>
<line x1="0" y1="267.5" x2="27" y2="267.5" stroke="#c8c8c8" stroke-width="1"/>
<line x1="28" y1="287.5" x2="1578" y2="287.5" stroke="#dadada" stroke-width="1"/>
<line x1="0" y1="287.5" x2="27" y2="287.5" stroke="#c8c8c8" stroke-width="1"/>
<line x1="28" y1="307.5" x2="1578" y2="307.5" stroke="#dadada" stroke-width="1"/>
<line x1="0" y1="307.5" x2="27" y2="307.5" stroke="#c8c8c8" stroke-width="1"/>
<line x1="28" y1="327.5" x2="1578" y2="327.5" stroke="#dadada" stroke-width="1"/>
<line x1="0" y1="327.5" x2="27" y2="327.5" stroke="#c8c8c8" stroke-width="1"/>
<line x1="28" y1="347.5" x2="1578" y2="347.5" stroke="#dadada" stroke-width="1"/>
<line x1="0" y1="347.5" x2="27" y2="347.5" stroke="#c8c8c8" stroke-width="1"/>
<line x1="28" y1="367.5" x2="1578" y2="367.5" stroke="#dadada" stroke-width="1"/>
<line x1="0" y1="367.5" x2="27" y2="367.5" stroke="#c8c8c8" stroke-width="1"/>
<line x1="28" y1="387.5" x2="1578" y2="387.5" stroke="#dadada" stroke-width="1"/>
<line x1="0" y1="387.5" x2="27" y2="387.5" stroke="#c8c8c8" stroke-width="1"/>
<line x1="28" y1="407.5" x2="1578" y2="407.5" stroke="#dadada" stroke-width="1"/>
<line x1="0" y1="407.5" x2="27" y2="407.5" stroke="#c8c8c8" stroke-width="1"/>
<line x1="28" y1="427.5" x2="1578" y2="427.5" stroke="#dadada" stroke-width="1"/>
<line x1="0" y1="427.5" x2="27" y2="427.5" stroke="#c8c8c8" stroke-width="1"/>
<line x1="28" y1="447.5" x2="1578" y2="447.5" stroke="#dadada" stroke-width="1"/>
<line x1="0" y1="447.5" x2="27" y2="447.5" stroke="#c8c8c8" stroke-width="1"/>
<line x1="28" y1="467.5" x2="1578" y2="467.5" stroke="#dadada" stroke-width="1"/>
<line x1="0" y1="467.5" x2="27" y2="467.5" stroke="#c8c8c8" stroke-width="1"/>
<line x1="28" y1="487.5" x2="1578" y2="487.5" stroke="#dadada" stroke-width="1"/>
<line x1="0" y1="487.5" x2="27" y2="487.5" stroke="#c8c8c8" stroke-width="1"/>
<line x1="28" y1="507.5" x2="1578" y2="507.5" stroke="#dadada" stroke-width="1"/>
<line x1="0" y1="507.5" x2="27" y2="507.5" stroke="#c8c8c8" stroke-width="1"/>
<line x1="28" y1="527.5" x2="1578" y2="527.5" stroke="#dadada" stroke-width="1"/>
<line x1="0" y1="527.5" x2="27" y2="527.5" stroke="#c8c8c8" stroke-width="1"/>
<line x1="28" y1="547.5" x2="1578" y2="547.5" stroke="#dadada" stroke-width="1"/>
<line x1="0" y1="547.5" x2="27" y2="547.5" stroke="#c8c8c8" stroke-width="1"/>
<line x1="28" y1="567.5" x2="1578" y2="567.5" stroke="#dadada" stroke-width="1"/>
<line x1="0" y1="567.5" x2="27" y2="567.5" stroke="#c8c8c8" stroke-width="1"/>
<line x1="28" y1="587.5" x2="1578" y2="587.5" stroke="#dadada" stroke-width="1"/>
<line x1="0" y1="587.5" x2="27" y2="587.5" stroke="#c8c8c8" stroke-width="1"/>
<line x1="28" y1="607.5" x2="1578" y2="607.5" stroke="#dadada" stroke-width="1"/>
<line x1="0" y1="607.5" x2="27" y2="607.5" stroke="#c8c8c8" stroke-width="1"/>
<line x1="28" y1="627.5" x2="1578" y2="627.5" stroke="#dadada" stroke-width="1"/>
<line x1="0" y1="627.5" x2="27" y2="627.5" stroke="#c8c8c8" stroke-width="1"/>
<line x1="28" y1="647.5" x2="1578" y2="647.5" stroke="#dadada" stroke-width="1"/>
<line x1="0" y1="647.5" x2="27" y2="647.5" stroke="#c8c8c8" stroke-width="1"/>
<line x1="28" y1="667.5" x2="1578" y2="667.5" stroke="#dadada" stroke-width="1"/>
<line x1="0" y1="667.5" x2="27" y2="667.5" stroke="#c8c8c8" stroke-width="1"/>
<line x1="28" y1="687.5" x2="1578" y2="687.5" stroke="#dadada" stroke-width="1"/>
<line x1="0" y1="687.5" x2="27" y2="687.5" stroke="#c8c8c8" stroke-width="1"/>
<line x1="28" y1="707.5" x2="1578" y2="707.5" stroke="#dadada" stroke-width="1"/>
<line x1="0" y1="707.5" x2="27" y2="707.5" stroke="#c8c8c8" stroke-width="1"/>
<line x1="28" y1="727.5" x2="1578" y2="727.5" stroke="#dadada" stroke-width="1"/>
<line x1="0" y1="727.5" x2="27" y2="727.5" stroke="#c8c8c8" stroke-width="1"/>
<line x1="28" y1="747.5" x2="1578" y2="747.5" stroke="#dadada" stroke-width="1"/>
<line x1="0" y1="747.5" x2="27" y2="747.5" stroke="#c8c8c8" stroke-width="1"/>
<line x1="28" y1="767.5" x2="1578" y2="767.5" stroke="#dadada" stroke-width="1"/>
<line x1="0" y1="767.5" x2="27" y2="767.5" stroke="#c8c8c8" stroke-width="1"/>
<line x1="28" y1="787.5" x2="1578" y2="787.5" stroke="#dadada" stroke-width="1"/>
<line x1="0" y1="787.5" x2="27" y2="787.5" stroke="#c8c8c8" stroke-width="1"/>
<line x1="28" y1="807.5" x2="1578" y2="807.5" stroke="#dadada" stroke-width="1"/>
<line x1="0" y1="807.5" x2="27" y2="807.5" stroke="#c8c8c8" stroke-width="1"/>
<line x1="161.5" y1="228" x2="161.5" y2="811" stroke="#dadada" stroke-width="1"/>
<line x1="161.5" y1="208" x2="161.5" y2="227" stroke="#c8c8c8" stroke-width="1"/>
<line x1="293.5" y1="228" x2="293.5" y2="811" stroke="#dadada" stroke-width="1"/>
<line x1="293.5" y1="208" x2="293.5" y2="227" stroke="#c8c8c8" stroke-width="1"/>
<line x1="426.5" y1="228" x2="426.5" y2="811" stroke="#dadada" stroke-width="1"/>
<line x1="426.5" y1="208" x2="426.5" y2="227" stroke="#c8c8c8" stroke-width="1"/>
<line x1="492.5" y1="228" x2="492.5" y2="811" stroke="#dadada" stroke-width="1"/>
<line x1="492.5" y1="208" x2="492.5" y2="227" stroke="#c8c8c8" stroke-width="1"/>
<line x1="559.5" y1="228" x2="559.5" y2="811" stroke="#dadada" stroke-width="1"/>
<line x1="559.5" y1="208" x2="559.5" y2="227" stroke="#c8c8c8" stroke-width="1"/>
<line x1="626.5" y1="228" x2="626.5" y2="811" stroke="#dadada" stroke-width="1"/>
<line x1="626.5" y1="208" x2="626.5" y2="227" stroke="#c8c8c8" stroke-width="1"/>
<line x1="692.5" y1="228" x2="692.5" y2="811" stroke="#dadada" stroke-width="1"/>
<line x1="692.5" y1="208" x2="692.5" y2="227" stroke="#c8c8c8" stroke-width="1"/>
<line x1="759.5" y1="228" x2="759.5" y2="811" stroke="#dadada" stroke-width="1"/>
<line x1="759.5" y1="208" x2="759.5" y2="227" stroke="#c8c8c8" stroke-width="1"/>
<line x1="826.5" y1="228" x2="826.5" y2="811" stroke="#dadada" stroke-width="1"/>
<line x1="826.5" y1="208" x2="826.5" y2="227" stroke="#c8c8c8" stroke-width="1"/>
<line x1="892.5" y1="228" x2="892.5" y2="811" stroke="#dadada" stroke-width="1"/>
<line x1="892.5" y1="208" x2="892.5" y2="227" stroke="#c8c8c8" stroke-width="1"/>
<line x1="959.5" y1="228" x2="959.5" y2="811" stroke="#dadada" stroke-width="1"/>
<line x1="959.5" y1="208" x2="959.5" y2="227" stroke="#c8c8c8" stroke-width="1"/>
<line x1="1026.5" y1="228" x2="1026.5" y2="811" stroke="#dadada" stroke-width="1"/>
<line x1="1026.5" y1="208" x2="1026.5" y2="227" stroke="#c8c8c8" stroke-width="1"/>
<line x1="1092.5" y1="228" x2="1092.5" y2="811" stroke="#dadada" stroke-width="1"/>
<line x1="1092.5" y1="208" x2="1092.5" y2="227" stroke="#c8c8c8" stroke-width="1"/>
<line x1="1159.5" y1="228" x2="1159.5" y2="811" stroke="#dadada" stroke-width="1"/>
<line x1="1159.5" y1="208" x2="1159.5" y2="227" stroke="#c8c8c8" stroke-width="1"/>
<line x1="1226.5" y1="228" x2="1226.5" y2="811" stroke="#dadada" stroke-width="1"/>
<line x1="1226.5" y1="208" x2="1226.5" y2="227" stroke="#c8c8c8" stroke-width="1"/>
<line x1="1292.5" y1="228" x2="1292.5" y2="811" stroke="#dadada" stroke-width="1"/>
<line x1="1292.5" y1="208" x2="1292.5" y2="227" stroke="#c8c8c8" stroke-width="1"/>
<line x1="1359.5" y1="228" x2="1359.5" y2="811" stroke="#dadada" stroke-width="1"/>
<line x1="1359.5" y1="208" x2="1359.5" y2="227" stroke="#c8c8c8" stroke-width="1"/>
<line x1="1426.5" y1="228" x2="1426.5" y2="811" stroke="#dadada" stroke-width="1"/>
<line x1="1426.5" y1="208" x2="1426.5" y2="227" stroke="#c8c8c8" stroke-width="1"/>
<line x1="1492.5" y1="228" x2="1492.5" y2="811" stroke="#dadada" stroke-width="1"/>
<line x1="1492.5" y1="208" x2="1492.5" y2="227" stroke="#c8c8c8" stroke-width="1"/>
<line x1="1559.5" y1="228" x2="1559.5" y2="811" stroke="#dadada" stroke-width="1"/>
<line x1="1559.5" y1="208" x2="1559.5" y2="227" stroke="#c8c8c8" stroke-width="1"/>
<line x1="27.5" y1="208" x2="27.5" y2="811" stroke="#c8c8c8" stroke-width="1"/>
<line x1="0" y1="227.5" x2="1578" y2="227.5" stroke="#c0c0c0" stroke-width="1"/>
<line x1="1578.5" y1="228" x2="1578.5" y2="812" stroke="#bdbdbd" stroke-width="1"/>
<polygon points="25,212 25,225 12,225" fill="#b4b4b4"/>
<rect x="293" y="248" width="133" height="19" fill="none" stroke="#217346" stroke-width="2"/>
<rect x="425" y="266" width="4" height="4" fill="#217346" stroke="#fff" stroke-width="0"/>
<rect x="293" y="226" width="134" height="2" fill="#217346"/>
<rect x="26" y="248" width="2" height="20" fill="#217346"/>
</svg>
<div class="a" style="left:27px;top:208px;width:134px;text-align:center;font-size:14.5px;line-height:20px;color:#262626">A</div>
<div class="a" style="left:161px;top:208px;width:132px;text-align:center;font-size:14.5px;line-height:20px;color:#262626">B</div>
<div class="a" style="left:293px;top:208px;width:133px;text-align:center;font-size:14.5px;line-height:20px;color:#217346">C</div>
<div class="a" style="left:426px;top:208px;width:66px;text-align:center;font-size:14.5px;line-height:20px;color:#262626">D</div>
<div class="a" style="left:492px;top:208px;width:67px;text-align:center;font-size:14.5px;line-height:20px;color:#262626">E</div>
<div class="a" style="left:559px;top:208px;width:67px;text-align:center;font-size:14.5px;line-height:20px;color:#262626">F</div>
<div class="a" style="left:626px;top:208px;width:66px;text-align:center;font-size:14.5px;line-height:20px;color:#262626">G</div>
<div class="a" style="left:692px;top:208px;width:67px;text-align:center;font-size:14.5px;line-height:20px;color:#262626">H</div>
<div class="a" style="left:759px;top:208px;width:67px;text-align:center;font-size:14.5px;line-height:20px;color:#262626">I</div>
<div class="a" style="left:826px;top:208px;width:66px;text-align:center;font-size:14.5px;line-height:20px;color:#262626">J</div>
<div class="a" style="left:892px;top:208px;width:67px;text-align:center;font-size:14.5px;line-height:20px;color:#262626">K</div>
<div class="a" style="left:959px;top:208px;width:67px;text-align:center;font-size:14.5px;line-height:20px;color:#262626">L</div>
<div class="a" style="left:1026px;top:208px;width:66px;text-align:center;font-size:14.5px;line-height:20px;color:#262626">M</div>
<div class="a" style="left:1092px;top:208px;width:67px;text-align:center;font-size:14.5px;line-height:20px;color:#262626">N</div>
<div class="a" style="left:1159px;top:208px;width:67px;text-align:center;font-size:14.5px;line-height:20px;color:#262626">O</div>
<div class="a" style="left:1226px;top:208px;width:66px;text-align:center;font-size:14.5px;line-height:20px;color:#262626">P</div>
<div class="a" style="left:1292px;top:208px;width:67px;text-align:center;font-size:14.5px;line-height:20px;color:#262626">Q</div>
<div class="a" style="left:1359px;top:208px;width:67px;text-align:center;font-size:14.5px;line-height:20px;color:#262626">R</div>
<div class="a" style="left:1426px;top:208px;width:66px;text-align:center;font-size:14.5px;line-height:20px;color:#262626">S</div>
<div class="a" style="left:1492px;top:208px;width:67px;text-align:center;font-size:14.5px;line-height:20px;color:#262626">T</div>
<div class="a" style="left:1px;top:228px;width:27px;text-align:center;font-size:14.5px;line-height:20px;color:#262626">1</div>
<div class="a" style="left:1px;top:248px;width:27px;text-align:center;font-size:14.5px;line-height:20px;color:#217346">2</div>
<div class="a" style="left:1px;top:268px;width:27px;text-align:center;font-size:14.5px;line-height:20px;color:#262626">3</div>
<div class="a" style="left:1px;top:288px;width:27px;text-align:center;font-size:14.5px;line-height:20px;color:#262626">4</div>
<div class="a" style="left:1px;top:308px;width:27px;text-align:center;font-size:14.5px;line-height:20px;color:#262626">5</div>
<div class="a" style="left:1px;top:328px;width:27px;text-align:center;font-size:14.5px;line-height:20px;color:#262626">6</div>
<div class="a" style="left:1px;top:348px;width:27px;text-align:center;font-size:14.5px;line-height:20px;color:#262626">7</div>
<div class="a" style="left:1px;top:368px;width:27px;text-align:center;font-size:14.5px;line-height:20px;color:#262626">8</div>
<div class="a" style="left:1px;top:388px;width:27px;text-align:center;font-size:14.5px;line-height:20px;color:#262626">9</div>
<div class="a" style="left:1px;top:408px;width:27px;text-align:center;font-size:14.5px;line-height:20px;color:#262626">10</div>
<div class="a" style="left:1px;top:428px;width:27px;text-align:center;font-size:14.5px;line-height:20px;color:#262626">11</div>
<div class="a" style="left:1px;top:448px;width:27px;text-align:center;font-size:14.5px;line-height:20px;color:#262626">12</div>
<div class="a" style="left:1px;top:468px;width:27px;text-align:center;font-size:14.5px;line-height:20px;color:#262626">13</div>
<div class="a" style="left:1px;top:488px;width:27px;text-align:center;font-size:14.5px;line-height:20px;color:#262626">14</div>
<div class="a" style="left:1px;top:508px;width:27px;text-align:center;font-size:14.5px;line-height:20px;color:#262626">15</div>
<div class="a" style="left:1px;top:528px;width:27px;text-align:center;font-size:14.5px;line-height:20px;color:#262626">16</div>
<div class="a" style="left:1px;top:548px;width:27px;text-align:center;font-size:14.5px;line-height:20px;color:#262626">17</div>
<div class="a" style="left:1px;top:568px;width:27px;text-align:center;font-size:14.5px;line-height:20px;color:#262626">18</div>
<div class="a" style="left:1px;top:588px;width:27px;text-align:center;font-size:14.5px;line-height:20px;color:#262626">19</div>
<div class="a" style="left:1px;top:608px;width:27px;text-align:center;font-size:14.5px;line-height:20px;color:#262626">20</div>
<div class="a" style="left:1px;top:628px;width:27px;text-align:center;font-size:14.5px;line-height:20px;color:#262626">21</div>
<div class="a" style="left:1px;top:648px;width:27px;text-align:center;font-size:14.5px;line-height:20px;color:#262626">22</div>
<div class="a" style="left:1px;top:668px;width:27px;text-align:center;font-size:14.5px;line-height:20px;color:#262626">23</div>
<div class="a" style="left:1px;top:688px;width:27px;text-align:center;font-size:14.5px;line-height:20px;color:#262626">24</div>
<div class="a" style="left:1px;top:708px;width:27px;text-align:center;font-size:14.5px;line-height:20px;color:#262626">25</div>
<div class="a" style="left:1px;top:728px;width:27px;text-align:center;font-size:14.5px;line-height:20px;color:#262626">26</div>
<div class="a" style="left:1px;top:748px;width:27px;text-align:center;font-size:14.5px;line-height:20px;color:#262626">27</div>
<div class="a" style="left:1px;top:768px;width:27px;text-align:center;font-size:14.5px;line-height:20px;color:#262626">28</div>
<div class="a" style="left:1px;top:788px;width:27px;text-align:center;font-size:14.5px;line-height:20px;color:#262626">29</div>
<div class="a" style="left:30px;top:229px;font-size:12px;line-height:20px;color:#000">SERIES NAME</div>
<div class="a" style="left:164px;top:229px;font-size:12.2px;line-height:20px;color:#000">RATINGS</div>
<div class="a" style="left:297px;top:229px;font-size:12px;line-height:20px;color:#000">RESULT</div>
<div class="a" style="left:30px;top:249px;font-size:13.3px;line-height:20px;color:#000">Fox summer</div>
<div class="a" style="left:164px;top:249px;font-size:14.2px;line-height:20px;color:#000">7.8/10</div>
<div class="a" style="left:297px;top:249px;font-size:13.5px;line-height:20px;color:#000">Good</div>
<div class="a" style="left:30px;top:269px;font-size:13.3px;line-height:20px;color:#000">True beauty</div>
<div class="a" style="left:164px;top:269px;font-size:14.2px;line-height:20px;color:#000">8.1/10</div>
<div class="a" style="left:297px;top:269px;font-size:13.5px;line-height:20px;color:#000">Great</div>
<div class="a" style="left:30px;top:289px;font-size:13.3px;line-height:20px;color:#000">He is Psychometric</div>
<div class="a" style="left:164px;top:289px;font-size:14.2px;line-height:20px;color:#000">7.8/10</div>
<div class="a" style="left:297px;top:289px;font-size:13.5px;line-height:20px;color:#000">Good</div>
<div class="a" style="left:30px;top:309px;font-size:14px;line-height:20px;color:#000">To the beautiful you</div>
<div class="a" style="left:164px;top:309px;font-size:14.2px;line-height:20px;color:#000">7.2/10</div>
<div class="a" style="left:297px;top:309px;font-size:13.5px;line-height:20px;color:#000">Good</div>
<div class="a" style="left:896px;top:508px;font-size:25.5px;line-height:32px;color:#000">developerpublish.com</div>
<!-- vertical scrollbar area -->
<div style="position:absolute;left:1579px;top:208px;width:21px;height:603px;background:#e6e6e6"></div>
<div style="position:absolute;left:1582px;top:210px;width:16px;height:16px;background:#fff;border:1px solid #d2d2d2"></div>
<div style="position:absolute;left:1582px;top:226px;width:16px;height:550px;background:#fff;border:1px solid #d2d2d2"></div>
<div style="position:absolute;left:1582px;top:776px;width:16px;height:20px;background:#dadada"></div>
<div style="position:absolute;left:1582px;top:796px;width:16px;height:16px;background:#fff;border:1px solid #d2d2d2"></div>
<svg width="1600" height="858" style="left:0;top:0">
 <path d="M1585.8 220.5 H1593.2 L1589.5 216.3 Z" fill="#777"/>
 <path d="M1585.8 802.3 H1593.2 L1589.5 806.5 Z" fill="#777"/>
</svg>
<!-- tab bar -->
<div style="position:absolute;left:0;top:811px;width:1600px;height:24px;background:#e6e6e6"></div>
<div style="position:absolute;left:0;top:811px;width:1600px;height:1px;background:#c6c6c6"></div>
<div style="position:absolute;left:86px;top:811px;width:66px;height:22px;background:#fff;border-left:1px solid #c6c6c6;border-right:1px solid #c6c6c6"></div>
<div style="position:absolute;left:86px;top:831px;width:66px;height:2px;background:#217346"></div>
<div class="a" style="left:96px;top:813px;font-size:13px;font-weight:bold;color:#217346;line-height:16px">Sheet1</div>
<svg width="1600" height="858" style="left:0;top:0">
 <path d="M28 819.5 V827.5 L23.5 823.5 Z" fill="#c6c6c6"/>
 <path d="M47 819.5 V827.5 L51.5 823.5 Z" fill="#c6c6c6"/>
 <circle cx="187.5" cy="823.7" r="7.8" fill="none" stroke="#7a7a7a" stroke-width="1.1"/>
 <path d="M183 823.7 H192 M187.5 819.2 V828.2" stroke="#666" stroke-width="1.4"/>
 <rect x="957.8" y="819" width="2" height="2" fill="#9a9a9a"/><rect x="957.8" y="823" width="2" height="2" fill="#9a9a9a"/><rect x="957.8" y="827" width="2" height="2" fill="#9a9a9a"/>
</svg>
<!-- horizontal scrollbar -->
<div style="position:absolute;left:972px;top:815px;width:607px;height:16px;background:#dadada"></div>
<div style="position:absolute;left:972px;top:815px;width:17px;height:16px;background:#fff;border:1px solid #d2d2d2"></div>
<div style="position:absolute;left:988px;top:815px;width:546px;height:16px;background:#fff;border:1px solid #d2d2d2"></div>
<div style="position:absolute;left:1563px;top:815px;width:16px;height:16px;background:#fff;border:1px solid #d2d2d2"></div>
<svg width="1600" height="858" style="left:0;top:0">
 <path d="M982 819.6 V827.2 L977.8 823.4 Z" fill="#777"/>
 <path d="M1569.3 819.6 V827.2 L1573.5 823.4 Z" fill="#777"/>
</svg>
<!-- status bar -->
<div style="position:absolute;left:0;top:835px;width:1600px;height:23px;background:#f3f3f3"></div>
<div style="position:absolute;left:0;top:835px;width:1600px;height:1px;background:#d4d4d4"></div>
<div class="a" style="left:8px;top:841px;font-size:11px;color:#444;line-height:14px">Ready</div>
<div style="position:absolute;left:1290px;top:836px;width:42px;height:22px;background:#c6c6c6"></div>
<svg width="1600" height="858" style="left:0;top:0">
 <!-- macro icon -->
 <circle cx="62.5" cy="842.5" r="2.6" fill="#6a6a6a"/>
 <rect x="65.5" y="841" width="6.5" height="3" fill="#6a6a6a"/>
 <rect x="60" y="845.5" width="12" height="7.5" fill="none" stroke="#6a6a6a" stroke-width="1"/>
 <path d="M62 848 H70 M62 850.5 H70 M64.5 846 V853 M67.5 846 V853" stroke="#6a6a6a" stroke-width="0.8" stroke-dasharray="1 1"/>
 <!-- normal view grid -->
 <rect x="1304.5" y="840.8" width="12.8" height="12.4" rx="0.8" fill="#bdbdbd" stroke="#6a6a6a" stroke-width="1.1"/>
 <path d="M1308.8 840.8 V853.2 M1313 840.8 V853.2 M1304.5 844.9 H1317.3 M1304.5 849.1 H1317.3" stroke="#6a6a6a" stroke-width="1.1"/>
 <rect x="1345.5" y="840.8" width="13" height="12.4" fill="none" stroke="#6a6a6a" stroke-width="1.1"/>
 <rect x="1348.5" y="842.5" width="7" height="8" fill="none" stroke="#6a6a6a" stroke-width="1"/>
 <rect x="1350.2" y="844.3" width="3.6" height="2.6" fill="#9a9a9a"/>
 <path d="M1350.2 848.6 H1353.8" stroke="#6a6a6a" stroke-width="0.9"/>
 <rect x="1387" y="840.8" width="13.6" height="12.4" fill="none" stroke="#6a6a6a" stroke-width="1.1"/>
 <path d="M1387 848.2 H1395.4 V840.8 M1391.8 840.8 V848.2 M1389.5 840.8 V848.2" fill="none" stroke="#6a6a6a" stroke-width="1"/>
 <path d="M1421 846.8 H1429" stroke="#6a6a6a" stroke-width="1.2"/>
 <path d="M1434 847.3 H1538" stroke="#9a9a9a" stroke-width="1"/>
 <rect x="1484" y="841" width="5" height="12" fill="#6a6a6a"/>
 <path d="M1543 846.8 H1551.5 M1547.25 842.5 V851" stroke="#6a6a6a" stroke-width="1.2"/>
</svg>
<div class="a" style="left:1565px;top:841px;font-size:10.5px;color:#555;line-height:13px">100%</div>

</body></html>
